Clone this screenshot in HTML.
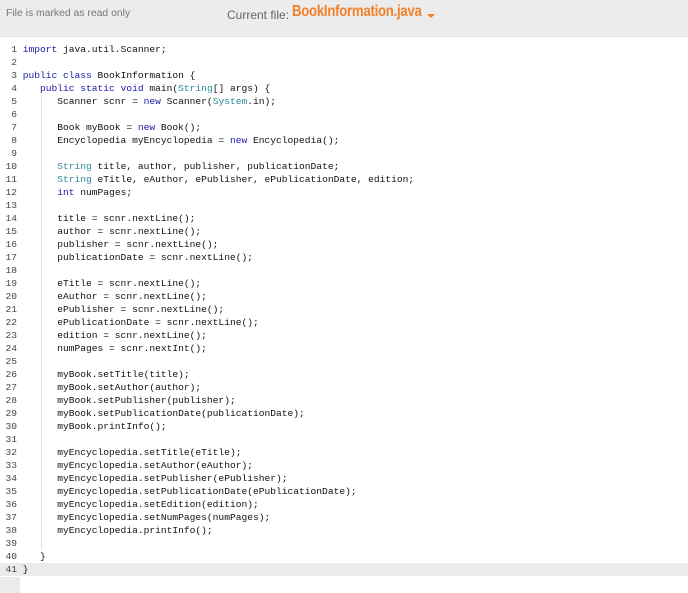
<!DOCTYPE html>
<html><head><meta charset="utf-8"><style>
body{margin:0;width:688px;height:593px;overflow:hidden;background:#fff;font-family:"Liberation Sans",sans-serif;position:relative}
#hdr{position:absolute;left:0;top:0;width:688px;height:36px;background:#ececec;border-bottom:1px solid #e2e2e2}
#ro{position:absolute;left:6px;top:8px;font-size:10.4px;color:#777}
#cf{position:absolute;left:227px;top:8px;font-size:12px;color:#666}
#fn{position:absolute;left:292px;top:3px;font-size:15.5px;color:#f0812a;font-weight:bold;letter-spacing:-0.3px;transform:scaleX(0.85);transform-origin:0 0;white-space:nowrap}
#car{position:absolute;left:427px;top:14px;width:0;height:0;border-left:4px solid transparent;border-right:4px solid transparent;border-top:4px solid #f0812a}
#code{position:absolute;left:0;top:43px;width:688px}
.l{height:13px;line-height:13px;position:relative;font-family:"Liberation Mono",monospace;font-size:9.6px;white-space:pre;color:#111}
.n{position:absolute;left:0;width:17px;text-align:right;color:#444}
.t{position:absolute;left:22.7px}
.k{color:#1a1aa6}.s{color:#2b8a9a}
.g{position:absolute;top:0;width:1px;height:13px;background:#e6e6e6}
.hl{background:#ebebeb}
#bot{position:absolute;left:0;top:577px;width:20px;height:16px;background:#ebebeb}
</style></head><body>
<div id="hdr"><div id="ro">File is marked as read only</div><div id="cf">Current file:</div><div id="fn">BookInformation.java</div><div id="car"></div></div>
<div id="code">
<div class="l"><span class="n">1</span><span class="t"><span class="k">import</span> java.util.Scanner;</span></div>
<div class="l"><span class="n">2</span></div>
<div class="l"><span class="n">3</span><span class="t"><span class="k">public class</span> BookInformation {</span></div>
<div class="l"><span class="n">4</span><span class="t">   <span class="k">public static void</span> main(<span class="s">String</span>[] args) {</span></div>
<div class="l"><span class="n">5</span><span class="g" style="left:41px"></span><span class="t">      Scanner scnr = <span class="k">new</span> Scanner(<span class="s">System</span>.in);</span></div>
<div class="l"><span class="n">6</span><span class="g" style="left:41px"></span></div>
<div class="l"><span class="n">7</span><span class="g" style="left:41px"></span><span class="t">      Book myBook = <span class="k">new</span> Book();</span></div>
<div class="l"><span class="n">8</span><span class="g" style="left:41px"></span><span class="t">      Encyclopedia myEncyclopedia = <span class="k">new</span> Encyclopedia();</span></div>
<div class="l"><span class="n">9</span><span class="g" style="left:41px"></span></div>
<div class="l"><span class="n">10</span><span class="g" style="left:41px"></span><span class="t">      <span class="s">String</span> title, author, publisher, publicationDate;</span></div>
<div class="l"><span class="n">11</span><span class="g" style="left:41px"></span><span class="t">      <span class="s">String</span> eTitle, eAuthor, ePublisher, ePublicationDate, edition;</span></div>
<div class="l"><span class="n">12</span><span class="g" style="left:41px"></span><span class="t">      <span class="k">int</span> numPages;</span></div>
<div class="l"><span class="n">13</span><span class="g" style="left:41px"></span></div>
<div class="l"><span class="n">14</span><span class="g" style="left:41px"></span><span class="t">      title = scnr.nextLine();</span></div>
<div class="l"><span class="n">15</span><span class="g" style="left:41px"></span><span class="t">      author = scnr.nextLine();</span></div>
<div class="l"><span class="n">16</span><span class="g" style="left:41px"></span><span class="t">      publisher = scnr.nextLine();</span></div>
<div class="l"><span class="n">17</span><span class="g" style="left:41px"></span><span class="t">      publicationDate = scnr.nextLine();</span></div>
<div class="l"><span class="n">18</span><span class="g" style="left:41px"></span></div>
<div class="l"><span class="n">19</span><span class="g" style="left:41px"></span><span class="t">      eTitle = scnr.nextLine();</span></div>
<div class="l"><span class="n">20</span><span class="g" style="left:41px"></span><span class="t">      eAuthor = scnr.nextLine();</span></div>
<div class="l"><span class="n">21</span><span class="g" style="left:41px"></span><span class="t">      ePublisher = scnr.nextLine();</span></div>
<div class="l"><span class="n">22</span><span class="g" style="left:41px"></span><span class="t">      ePublicationDate = scnr.nextLine();</span></div>
<div class="l"><span class="n">23</span><span class="g" style="left:41px"></span><span class="t">      edition = scnr.nextLine();</span></div>
<div class="l"><span class="n">24</span><span class="g" style="left:41px"></span><span class="t">      numPages = scnr.nextInt();</span></div>
<div class="l"><span class="n">25</span><span class="g" style="left:41px"></span></div>
<div class="l"><span class="n">26</span><span class="g" style="left:41px"></span><span class="t">      myBook.setTitle(title);</span></div>
<div class="l"><span class="n">27</span><span class="g" style="left:41px"></span><span class="t">      myBook.setAuthor(author);</span></div>
<div class="l"><span class="n">28</span><span class="g" style="left:41px"></span><span class="t">      myBook.setPublisher(publisher);</span></div>
<div class="l"><span class="n">29</span><span class="g" style="left:41px"></span><span class="t">      myBook.setPublicationDate(publicationDate);</span></div>
<div class="l"><span class="n">30</span><span class="g" style="left:41px"></span><span class="t">      myBook.printInfo();</span></div>
<div class="l"><span class="n">31</span><span class="g" style="left:41px"></span></div>
<div class="l"><span class="n">32</span><span class="g" style="left:41px"></span><span class="t">      myEncyclopedia.setTitle(eTitle);</span></div>
<div class="l"><span class="n">33</span><span class="g" style="left:41px"></span><span class="t">      myEncyclopedia.setAuthor(eAuthor);</span></div>
<div class="l"><span class="n">34</span><span class="g" style="left:41px"></span><span class="t">      myEncyclopedia.setPublisher(ePublisher);</span></div>
<div class="l"><span class="n">35</span><span class="g" style="left:41px"></span><span class="t">      myEncyclopedia.setPublicationDate(ePublicationDate);</span></div>
<div class="l"><span class="n">36</span><span class="g" style="left:41px"></span><span class="t">      myEncyclopedia.setEdition(edition);</span></div>
<div class="l"><span class="n">37</span><span class="g" style="left:41px"></span><span class="t">      myEncyclopedia.setNumPages(numPages);</span></div>
<div class="l"><span class="n">38</span><span class="g" style="left:41px"></span><span class="t">      myEncyclopedia.printInfo();</span></div>
<div class="l"><span class="n">39</span><span class="g" style="left:41px"></span></div>
<div class="l"><span class="n">40</span><span class="t">   }</span></div>
<div class="l hl"><span class="n">41</span><span class="t">}</span></div>
</div>
<div id="bot"></div>
</body></html>
